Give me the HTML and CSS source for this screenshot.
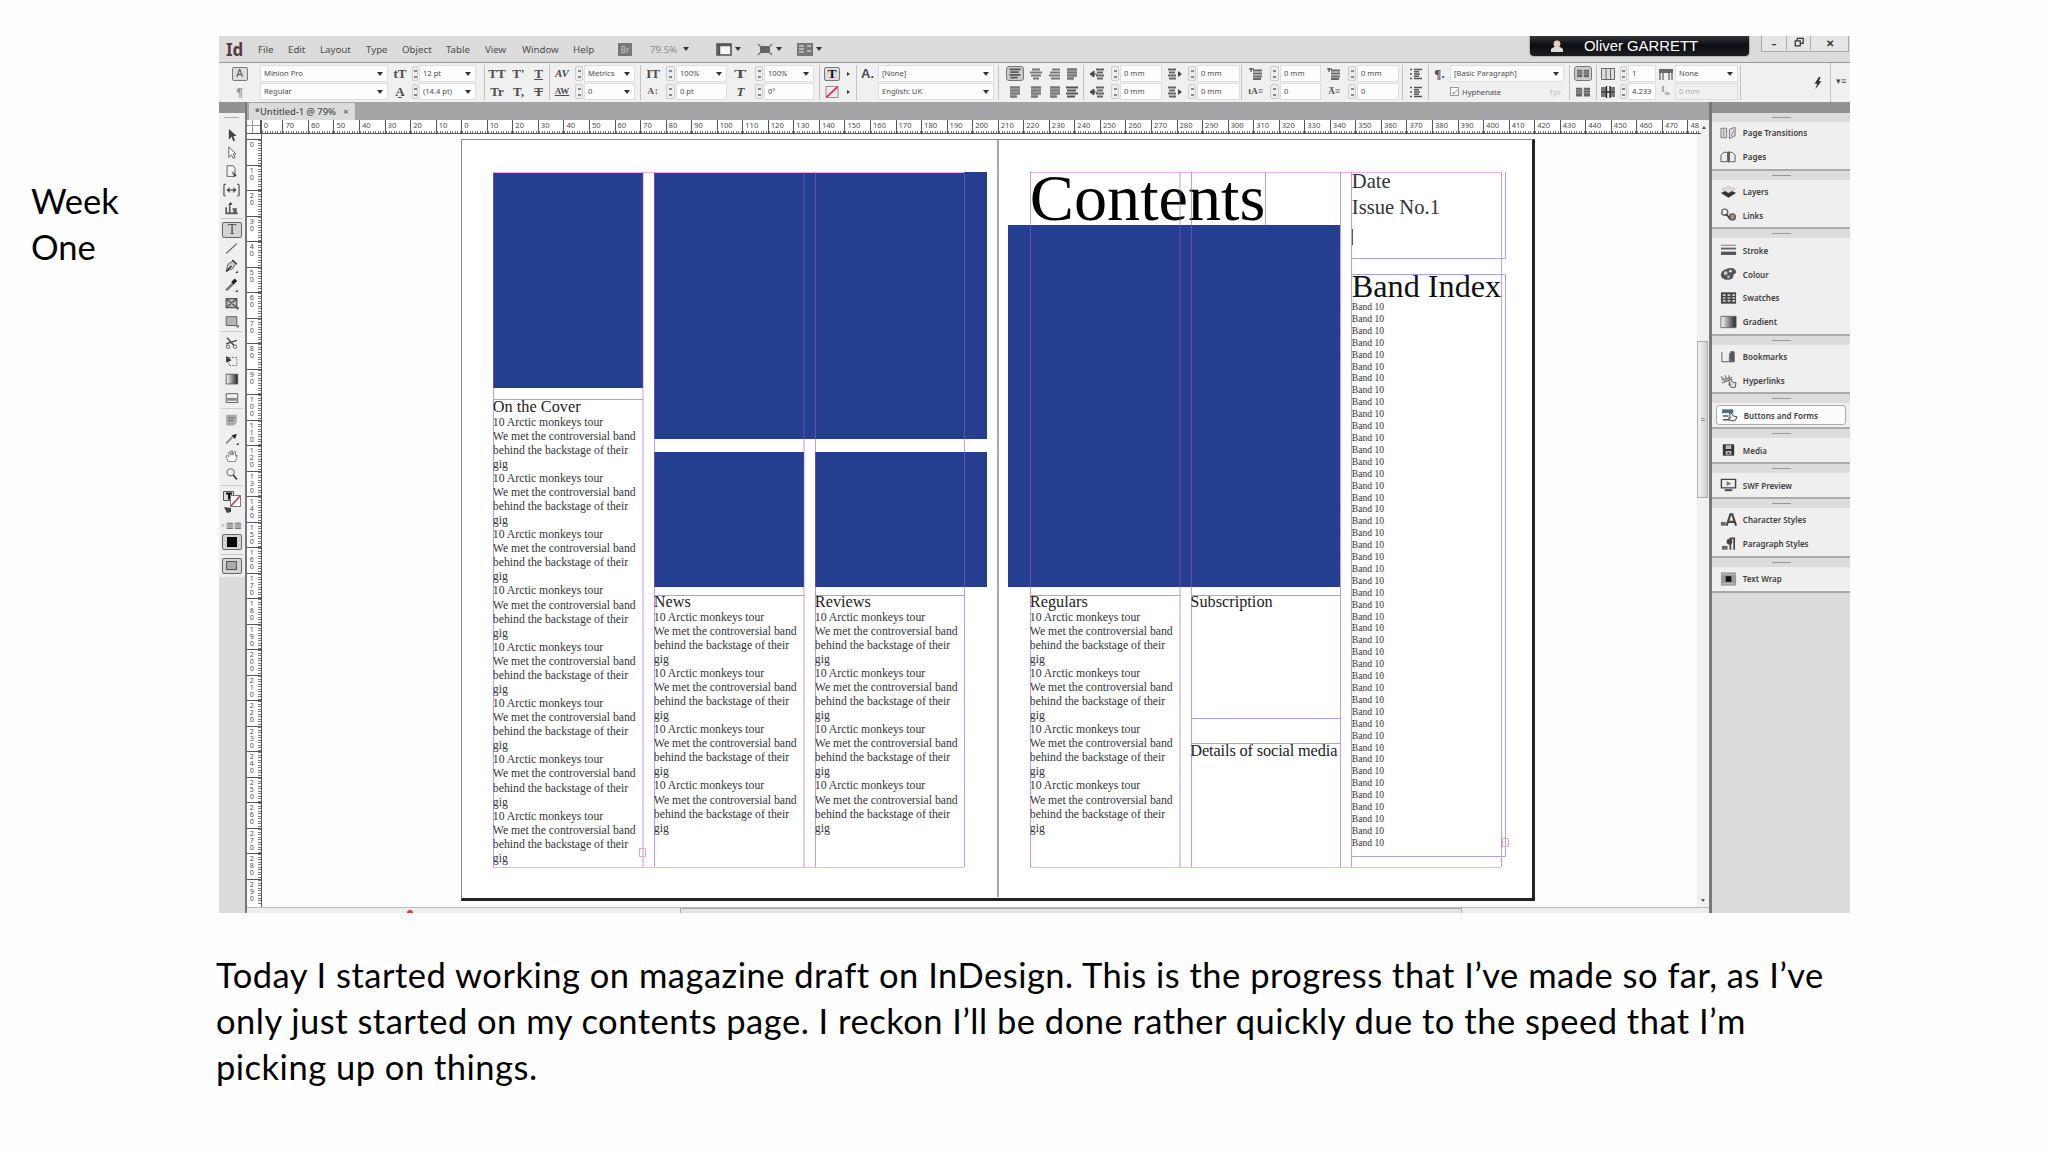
FILE: index.html
```
<!DOCTYPE html>
<html lang="en">
<head>
  <meta charset="UTF-8" />
  <meta name="viewport" content="width=device-width, initial-scale=1.0" />
  <title>Week One - Magazine Draft</title>
  <link rel="stylesheet" href="styles.css">
</head>
<body>

  <svg class="sprite">
    <symbol id="align" viewBox="0 0 12 12"><path d="M0 1.5h12M1 4.5h9M0 7.5h12M1 10.5h8" stroke="#555" stroke-width="2"/></symbol>
    <symbol id="center" viewBox="0 0 12 12"><path d="M2 1.5h8M0 4.5h12M1 7.5h10M3 10.5h6" stroke="#777" stroke-width="2"/></symbol>
    <symbol id="right" viewBox="0 0 12 12"><path d="M3 1.5h8M1 4.5h10M0 7.5h11M2 10.5h9" stroke="#777" stroke-width="2"/></symbol>
    <symbol id="justify" viewBox="0 0 12 12"><path d="M1 1.5h10M1 4.5h10M1 7.5h10M1 10.5h7" stroke="#777" stroke-width="2.3"/></symbol>
    <symbol id="indent" viewBox="0 0 14 12"><path d="M6 1.5h8M7 4.5h6M6 7.5h8M7 10.5h6" stroke="#666" stroke-width="2"/><path d="M0 6l4-3v6zM3 6h4" fill="#444" stroke="#444"/></symbol>
    <symbol id="outdent" viewBox="0 0 14 12"><path d="M0 1.5h8M1 4.5h6M0 7.5h8M1 10.5h7" stroke="#666" stroke-width="2"/><path d="M14 6l-4-3v6z" fill="#444"/></symbol>
    <symbol id="space" viewBox="0 0 14 12"><path d="M4 2.5h9M4 5.5h9M4 8.500h9M4 11h8" stroke="#666" stroke-width="2.200"/><path d="M0 1h5M2 0v4" stroke="#333"/></symbol>
    <symbol id="list" viewBox="0 0 12 12"><path d="M0 1.500h2M4 1.500h8M0 6h2M4 6h6M0 10.500h2M4 10.500h8M4 3.700h5M4 8.300h5" stroke="#555" stroke-width="1.500"/></symbol>
    <symbol id="cols" viewBox="0 0 14 12"><path d="M.5.500h13v11H.5zM5 0v12M9.500 0v12" fill="#ddd" stroke="#666"/></symbol>
    <symbol id="gutter" viewBox="0 0 14 12"><path d="M0 3h5M9 3h5M0 9h5M9 9h5" stroke="#777" stroke-width="4"/><path d="M0 6h14M5.500 0v12M9 0v12" stroke="#222" stroke-width="1.300"/></symbol>
    <symbol id="span" viewBox="0 0 16 12"><path d="M0 1h7v10H0zM9 1h7v10H9z" fill="#666"/><path d="M0 4h16M0 7h16" stroke="#aaa"/></symbol>
    <symbol id="across" viewBox="0 0 14 12"><path d="M0 1h14v4H0z" fill="#666"/><path d="M1 5v7M4 5v7M10 5v7M13 5v7" stroke="#777" stroke-width="1.500"/></symbol>
    <symbol id="none" viewBox="0 0 15 14"><path d="M.5.500h14v13H.5z" fill="#fbe9ee" stroke="#777"/><path d="M1 13L14 1" stroke="#c8324e" stroke-width="2"/></symbol>
    <symbol id="screen" viewBox="0 0 16 13"><path d="M1 1h14v11H1z" fill="#f6f6f6" stroke="#555" stroke-width="1.600"/><path d="M1 2h14M3 2v10" stroke="#555" stroke-width="2.500"/></symbol>
    <symbol id="frame" viewBox="0 0 16 13"><path d="M3 3h10v7H3z" fill="#666"/><path d="M1 1l3 3M15 1l-3 3M1 12l3-3M15 12l-3-3" stroke="#777" stroke-width="1.500"/></symbol>
    <symbol id="arrange" viewBox="0 0 16 13"><path d="M0 0h16v13H0z" fill="#777"/><path d="M2 3h5M2 6h5M2 9h5M10 3h4M10 8h4" stroke="#ccc" stroke-width="1.500"/></symbol>
    <symbol id="restore" viewBox="0 0 12 12"><path d="M4 1.500h7v6H4z" fill="none" stroke="#333" stroke-width="1.500"/><path d="M1.500 4.500h6v6h-6z" fill="#e6e6e6" stroke="#333" stroke-width="1.500"/></symbol>
    <symbol id="bolt" viewBox="0 0 12 14"><path d="M7 0L2 8h3l-2 6 7-9H7l2-5z" fill="#333"/></symbol>

    <symbol id="t-select" viewBox="0 0 16 16"><path d="M5 1v12l3-3 2 5 2-1-2-5h4z" fill="#444"/></symbol>
    <symbol id="t-direct" viewBox="0 0 16 16"><path d="M5 1v12l3-3 2 4 2-1-2-4h3z" fill="#fff" stroke="#555"/></symbol>
    <symbol id="t-page" viewBox="0 0 16 16"><path d="M3 2h7l2 3v9H3z" fill="#f4f4f4" stroke="#555"/><path d="M8 8l6 5-3 1z" fill="#444"/></symbol>
    <symbol id="t-gap" viewBox="0 0 18 14"><path d="M1 1v12M17 1v12M4 7h10M1 1h2M1 13h2M17 1h-2M17 13h-2" stroke="#555" stroke-width="1.300"/><path d="M4 7l3-3v6zM14 7l-3-3v6z" fill="#444"/></symbol>
    <symbol id="t-collect" viewBox="0 0 16 16"><path d="M2 7v7h13M6 5v8M9 9h2v4M13 8v5" stroke="#555" stroke-width="1.800" fill="none"/><path d="M4 5l3-4 2 3" fill="#333"/></symbol>
    <symbol id="t-line" viewBox="0 0 16 16"><path d="M2 14L14 3" stroke="#555" stroke-width="1.200"/></symbol>
    <symbol id="t-pen" viewBox="0 0 16 16"><path d="M2 14l2-8 6-4 3 3-4 6z" fill="#ccc" stroke="#555"/><path d="M2 14l6-6M9 1l5 5" stroke="#333" stroke-width="1.600"/><path d="M15 13v3h-3z" fill="#333"/></symbol>
    <symbol id="t-pencil" viewBox="0 0 16 16"><path d="M2 14L11 5" stroke="#777" stroke-width="3"/><path d="M9 6l4-4" stroke="#222" stroke-width="4"/><path d="M15 13v3h-3z" fill="#333"/></symbol>
    <symbol id="t-rectframe" viewBox="0 0 16 16"><path d="M2 3h12v10H2zM2 3l12 10M14 3L2 13" fill="#bbb" stroke="#555" stroke-width="1.400"/><path d="M16 12v3h-3z" fill="#333"/></symbol>
    <symbol id="t-rect" viewBox="0 0 16 16"><path d="M2 3h12v10H2z" fill="#b5b5b5" stroke="#555"/><path d="M16 12v3h-3z" fill="#333"/></symbol>
    <symbol id="t-scissors" viewBox="0 0 16 16"><path d="M3 2l8 9M2 9l12-4" stroke="#444" stroke-width="1.500"/><circle cx="12" cy="12" r="2" fill="none" stroke="#555"/><circle cx="4" cy="12" r="2" fill="none" stroke="#555"/></symbol>
    <symbol id="t-transform" viewBox="0 0 16 16"><path d="M5 4h9v9H5z" fill="none" stroke="#555" stroke-dasharray="2 1.500"/><path d="M2 2v8l6-3z" fill="#333"/></symbol>
    <symbol id="t-gradient" viewBox="0 0 16 16"><path d="M2 2.500h13v11H2z" fill="url(#grad)" stroke="#555"/></symbol>
    <symbol id="t-feather" viewBox="0 0 16 16"><path d="M2 3h13v10H2z" fill="#eee" stroke="#555"/><path d="M3 8h11v3H3z" fill="#888"/></symbol>
    <symbol id="t-note" viewBox="0 0 16 16"><path d="M2 2h12v8l-3 4H2z" fill="#aaa"/><path d="M4 5.500h8M4 8.500h6" stroke="#666"/></symbol>
    <symbol id="t-dropper" viewBox="0 0 16 16"><path d="M2 14l7-7" stroke="#888" stroke-width="2"/><path d="M8 5l4 4 2-6z" fill="#222"/><path d="M16 13v3h-3z" fill="#333"/></symbol>
    <symbol id="t-hand" viewBox="0 0 16 16"><path d="M4 14L1.500 8l2-.5L5 9V3.500h1.500L7.500 7V2H9l.5 5L11 3h1.500v5l2-1-2 7z" fill="#fff" stroke="#777"/></symbol>
    <symbol id="t-zoom" viewBox="0 0 16 16"><circle cx="7" cy="6" r="4" fill="#eee" stroke="#777" stroke-width="1.300"/><path d="M10 9l4 5" stroke="#444" stroke-width="2"/></symbol>

    <symbol id="p-trans" viewBox="0 0 18 14"><path d="M1 2h6v10H1zM10 3l6-2v9l-6 3z" fill="#ddd" stroke="#777"/><path d="M4 3v8M12 10l3-6" stroke="#888"/></symbol>
    <symbol id="p-pages" viewBox="0 0 18 14"><path d="M1 12V5l3-3h4v10zM10 12V2h3l3 3v7z" fill="#eee" stroke="#555"/><path d="M9 1v12" stroke="#555"/></symbol>
    <symbol id="p-layers" viewBox="0 0 18 14"><path d="M1 8l8-4 8 4-8 5z" fill="#333"/><path d="M2 4l7-3 7 3-7 4z" fill="#ddd" stroke="#999" stroke-width=".5"/></symbol>
    <symbol id="p-links" viewBox="0 0 18 14"><circle cx="5" cy="4" r="3.200" fill="none" stroke="#666" stroke-width="1.500"/><circle cx="13" cy="9" r="3.200" fill="#999" stroke="#555" stroke-width="1.500"/><path d="M6 6l5 5" stroke="#333" stroke-width="1.500"/></symbol>
    <symbol id="p-stroke" viewBox="0 0 18 14"><path d="M1 2h16" stroke="#777"/><path d="M1 5.500h16" stroke="#666" stroke-width="2"/><path d="M1 10.500h16" stroke="#555" stroke-width="3.500"/></symbol>
    <symbol id="p-colour" viewBox="0 0 18 14"><path d="M9 1c5-1 8 1 8 4 0 2-3 2-3 4 0 3-3 4-6 4-4 0-7-2-7-5 0-4 4-6 8-7z" fill="#555"/><circle cx="6" cy="6" r="2" fill="#ccc"/><circle cx="11" cy="4" r="1.500" fill="#ddd"/><circle cx="9" cy="10" r="1.500" fill="#bbb"/></symbol>
    <symbol id="p-swatches" viewBox="0 0 18 14"><path d="M1 1h16v12H1z" fill="#444"/><path d="M3 4h3M8 4h3M13 4h3M3 7h3M8 7h3M13 7h3M3 10h3M8 10h3M13 10h3" stroke="#ccc" stroke-width="1.700"/></symbol>
    <symbol id="p-gradient" viewBox="0 0 18 14"><path d="M1 1h16v12H1z" fill="url(#grad)" stroke="#666"/></symbol>
    <symbol id="p-book" viewBox="0 0 18 14"><path d="M2 2v10h7l1-1V3M10 12h5V2h-3z" fill="#eee" stroke="#555"/><path d="M11 1h4v12l-2-2-2 2z" fill="#555"/></symbol>
    <symbol id="p-hyper" viewBox="0 0 18 14"><path d="M1 2l5 6M5 1l3 6M9 1l2 6M1 6l12-3M2 9l11-4" stroke="#777" stroke-width="1.200"/><path d="M9 6l2 5-2-1 3 4h4l1-5-4-1-2-3z" fill="#ddd" stroke="#555"/></symbol>
    <symbol id="p-buttons" viewBox="0 0 18 14"><path d="M1 1h12v4H1z" fill="#4a7474"/><path d="M2 8h6M2 12h8" stroke="#555" stroke-width="1.500"/><path d="M9 5l1 5H8l2 3h5l2-4-4-1-2-3z" fill="#eee" stroke="#444"/></symbol>
    <symbol id="p-media" viewBox="0 0 18 14"><path d="M3 1h12v12H3z" fill="#333"/><path d="M6 2h6v4H6zM6 8h6v4H6z" fill="#bbb"/><path d="M8 9l3 1.500-3 1z" fill="#222"/></symbol>
    <symbol id="p-swf" viewBox="0 0 18 14"><path d="M1.500 1h15v9h-15z" fill="#eee" stroke="#444" stroke-width="1.500"/><path d="M7 3l5 2.500L7 8z" fill="#777"/><path d="M5 12.500h8" stroke="#444" stroke-width="2"/></symbol>
    <symbol id="p-char" viewBox="0 0 18 14"><path d="M7 13L11 1h2l4 12M9 9h6" fill="none" stroke="#444" stroke-width="2.200"/><path d="M1 9h5v4H1z" fill="#666"/></symbol>
    <symbol id="p-para" viewBox="0 0 18 14"><path d="M11 13V1h5M15 1v12" stroke="#444" stroke-width="1.800" fill="none"/><circle cx="10" cy="4.500" r="3" fill="#444"/><path d="M2 9h6v4H2z" fill="#666"/></symbol>
    <symbol id="p-wrap" viewBox="0 0 18 14"><path d="M1 0h16v14H1z" fill="#999"/><path d="M6 4h6v6H6z" fill="#111"/><path d="M2 2h14M2 12h14" stroke="#bbb"/></symbol>
    <linearGradient id="grad"><stop offset="0" stop-color="#fff"/><stop offset="1" stop-color="#222"/></linearGradient>
  </svg>

  <div class="slide">
    <h1 class="week">Week<br>One</h1>

    <div class="app">
      <div class="menubar">
        <span class="brand">Id</span>
        <span>File</span><span>Edit</span><span>Layout</span><span>Type</span><span>Object</span><span>Table</span><span>View</span><span>Window</span><span>Help</span>
        <span class="bridge">Br</span>
        <span class="zoom">79.5%</span>
        <i class="arrow"></i>
        <span class="view"><svg><use href="#screen"/></svg><i class="arrow"></i></span>
        <span class="view"><svg><use href="#frame"/></svg><i class="arrow"></i></span>
        <span class="view"><svg><use href="#arrange"/></svg><i class="arrow"></i></span>
        <div class="user">
          <svg viewBox="0 0 14 12"><path d="M1 12v-3l3-2h6l3 2v3z" fill="#ddd"/><circle cx="7" cy="4" r="3.400" fill="#e8cdb8"/></svg>
          Oliver GARRETT
        </div>
        <div class="window-buttons"><span>&#8211;</span><span><svg><use href="#restore"/></svg></span><span>&#10005;</span></div>
      </div>

      <div class="control">
        <div class="grp g-font">
          <b class="on ico">A</b><div class="field">Minion Pro<i class="arrow"></i></div>
          <b class="ico grey">¶</b><div class="field">Regular<i class="arrow"></i></div>
        </div>
        <div class="grp g-size">
          <b class="ico">tT</b><i class="spin"></i><div class="field">12 pt<i class="arrow"></i></div>
          <b class="ico">A&#817;</b><i class="spin"></i><div class="field">(14.4 pt)<i class="arrow"></i></div>
        </div>
        <div class="grp g-case">
          <b class="ico">TT</b><b class="ico">T'</b><b class="ico"><u>T</u></b>
          <b class="ico">Tr</b><b class="ico">T,</b><b class="ico"><s>T</s></b>
        </div>
        <div class="grp g-kern">
          <b class="ico kern"><em>AV</em></b><i class="spin"></i><div class="field">Metrics<i class="arrow"></i></div>
          <b class="ico small"><u>AW</u></b><i class="spin"></i><div class="field">0<i class="arrow"></i></div>
        </div>
        <div class="grp g-scale">
          <b class="ico">IT</b><i class="spin"></i><div class="field">100%<i class="arrow"></i></div>
          <b class="ico wide">T</b><i class="spin"></i><div class="field">100%<i class="arrow"></i></div>
          <b class="ico small">A&#8597;</b><i class="spin"></i><div class="field">0 pt</div>
          <b class="ico"><em>T</em></b><i class="spin"></i><div class="field">0°</div>
        </div>
        <div class="grp g-fill">
          <b class="ico boxed">T</b><i class="next"></i>
          <svg class="ico"><use href="#none"/></svg><i class="next"></i>
        </div>
        <div class="grp g-style">
          <b class="ico sans">A.</b><div class="field">[None]<i class="arrow"></i></div>
          <span></span><div class="field">English: UK<i class="arrow"></i></div>
        </div>
        <div class="grp g-align">
          <svg class="ico on"><use href="#align"/></svg><svg class="ico"><use href="#center"/></svg><svg class="ico"><use href="#right"/></svg><svg class="ico"><use href="#justify"/></svg>
          <svg class="ico"><use href="#justify"/></svg><svg class="ico"><use href="#justify"/></svg><svg class="ico"><use href="#justify"/></svg><svg class="ico"><use href="#align"/></svg>
        </div>
        <div class="grp g-indent">
          <svg class="ico"><use href="#indent"/></svg><i class="spin"></i><div class="field">0 mm</div>
          <svg class="ico"><use href="#outdent"/></svg><i class="spin"></i><div class="field">0 mm</div>
          <svg class="ico"><use href="#indent"/></svg><i class="spin"></i><div class="field">0 mm</div>
          <svg class="ico"><use href="#outdent"/></svg><i class="spin"></i><div class="field">0 mm</div>
        </div>
        <div class="grp g-space">
          <svg class="ico"><use href="#space"/></svg><i class="spin"></i><div class="field">0 mm</div>
          <svg class="ico"><use href="#space"/></svg><i class="spin"></i><div class="field">0 mm</div>
          <b class="ico small">tA≡</b><i class="spin"></i><div class="field">0</div>
          <b class="ico small">A&#773;≡</b><i class="spin"></i><div class="field">0</div>
        </div>
        <div class="grp g-list">
          <svg class="ico"><use href="#list"/></svg>
          <svg class="ico"><use href="#list"/></svg>
        </div>
        <div class="grp g-para">
          <b class="ico">¶.</b><div class="field">[Basic Paragraph]<i class="arrow"></i></div>
          <span></span><div class="hyphen"><i class="check">✓</i>Hyphenate<span>Tpr</span></div>
        </div>
        <div class="grp g-span">
          <svg class="ico on"><use href="#span"/></svg>
          <svg class="ico"><use href="#span"/></svg>
        </div>
        <div class="grp g-cols">
          <svg class="ico"><use href="#cols"/></svg><i class="spin"></i><div class="field">1</div>
          <svg class="ico"><use href="#across"/></svg><div class="field">None<i class="arrow"></i></div>
          <svg class="ico"><use href="#gutter"/></svg><i class="spin"></i><div class="field">4.233</div>
          <b class="ico small grey">I<sub>m</sub></b><div class="field off">0 mm</div>
        </div>
        <div class="quick"><svg class="ico"><use href="#bolt"/></svg></div>
        <div class="flyout">▾≡</div>
      </div>

      <div class="workspace">
        <div class="tools">
          <div class="bar"></div>
          <div class="grip"></div>
          <svg><use href="#t-select"/></svg>
          <svg><use href="#t-direct"/></svg>
          <svg><use href="#t-page"/></svg>
          <svg><use href="#t-gap"/></svg>
          <svg><use href="#t-collect"/></svg>
          <hr>
          <div class="tool on">T</div>
          <svg><use href="#t-line"/></svg>
          <svg><use href="#t-pen"/></svg>
          <svg><use href="#t-pencil"/></svg>
          <svg><use href="#t-rectframe"/></svg>
          <svg><use href="#t-rect"/></svg>
          <hr>
          <svg><use href="#t-scissors"/></svg>
          <svg><use href="#t-transform"/></svg>
          <svg><use href="#t-gradient"/></svg>
          <svg><use href="#t-feather"/></svg>
          <hr>
          <svg><use href="#t-note"/></svg>
          <svg><use href="#t-dropper"/></svg>
          <svg><use href="#t-hand"/></svg>
          <svg><use href="#t-zoom"/></svg>
          <hr>
          <svg class="paint" viewBox="0 0 20 26">
            <path d="M1.500 2.500h10v9h-10z" fill="#ddd" stroke="#555"/><path d="M4 4.500h6M7 4.500v6" stroke="#111" stroke-width="2"/>
            <path d="M8.500 6.500h10v11h-10z" fill="#fff" stroke="#777"/><path d="M9 17l9-10" stroke="#c8324e" stroke-width="1.500"/>
            <path d="M2 18l7 1v4l-4 1z" fill="#444"/>
          </svg>
          <div class="mini">▫ ▥▥</div>
          <div class="tool on"><i class="black"></i></div>
          <hr>
          <div class="tool on"><i class="mode"></i></div>
        </div>

        <div class="document">
          <div class="tabs"><div class="tab">*Untitled-1 @ 79% <span>×</span></div></div>
          <div class="ruler-row">
            <div class="corner"></div>
            <div class="ruler" id="rulerX"></div>
            <div class="scroll-cap"><i></i></div>
          </div>
          <div class="canvas">
            <div class="ruler-v" id="rulerY"></div>
            <div class="pasteboard">
              <div class="spread">
                <div class="pic pic-a"></div>
                <div class="pic pic-b"></div>
                <div class="pic pic-c"></div>
                <div class="pic pic-d"></div>
                <div class="pic pic-e"></div>

                <div class="story cover" data-repeat="8"><h3>On the Cover</h3></div>
                <div class="story news" data-repeat="4"><h3>News</h3></div>
                <div class="story reviews" data-repeat="4"><h3>Reviews</h3></div>
                <div class="story regulars" data-repeat="4"><h3>Regulars</h3></div>
                <div class="story subscription"><h3>Subscription</h3></div>
                <div class="story social"><h3>Details of social media</h3></div>
                <h2 class="contents">Contents</h2>
                <div class="issue">Date<br>Issue No.1</div>
                <div class="bands" id="bands"><h3>Band Index</h3></div>

                <!-- margins, columns and frame edges -->
                <svg class="guides" viewBox="462 140 1070 757">
                  <path class="spine" d="M998 140V897"/>
                  <path class="margin" d="M493 172.500H964M493 867.500H964M1030 172.500H1501M1030 867.500H1501"/>
                  <path class="column" d="M493.500 172V867M643 172V867M654.500 172V867M804 172V867M815.500 172V867M964.500 172V867M1030.500 172V867M1180 172V867M1191.500 172V867M1340.500 172V867M1351.500 172V867M1501.500 172V867"/>
                  <path class="edge" d="M493 399.500H643M654 595.500H804M815 595.500H964M1030 595.500H1180M1191 595.500H1340M1191 718.500H1340M1191 743.500H1340M1265.500 172V225M1351 258.500H1505.500V172M1351 274.500H1505.500V856.500H1351"/>
                  <path class="overset" d="M1502.500 838.500h6v8h-6zM639.500 848.500h6v8h-6z"/>
                  <path class="caret" d="M1352.500 229V245"/>
                </svg>
              </div>
            </div>
            <div class="scrollbar"><div class="thumb">=</div><i></i></div>
          </div>
          <div class="status"><span></span><i class="dot"></i><div class="track"></div></div>
        </div>

        <div class="dock">
          <div class="bar"></div>
          <div class="panel"><a><svg><use href="#p-trans"/></svg>Page Transitions</a><a><svg><use href="#p-pages"/></svg>Pages</a></div>
          <div class="panel"><a><svg><use href="#p-layers"/></svg>Layers</a><a><svg><use href="#p-links"/></svg>Links</a></div>
          <div class="panel"><a><svg><use href="#p-stroke"/></svg>Stroke</a><a><svg><use href="#p-colour"/></svg>Colour</a><a><svg><use href="#p-swatches"/></svg>Swatches</a><a><svg><use href="#p-gradient"/></svg>Gradient</a></div>
          <div class="panel"><a><svg><use href="#p-book"/></svg>Bookmarks</a><a><svg><use href="#p-hyper"/></svg>Hyperlinks</a></div>
          <div class="panel"><a class="active"><svg><use href="#p-buttons"/></svg>Buttons and Forms</a></div>
          <div class="panel"><a><svg><use href="#p-media"/></svg>Media</a></div>
          <div class="panel"><a><svg><use href="#p-swf"/></svg>SWF Preview</a></div>
          <div class="panel"><a><svg><use href="#p-char"/></svg>Character Styles</a><a><svg><use href="#p-para"/></svg>Paragraph Styles</a></div>
          <div class="panel"><a><svg><use href="#p-wrap"/></svg>Text Wrap</a></div>
        </div>
      </div>
    </div>

    <p class="caption">Today I started working on magazine draft on InDesign. This is the progress that I’ve made so far, as I’ve<br>only just started on my contents page. I reckon I’ll be done rather quickly due to the speed that I’m<br>picking up on things.</p>
  </div>

  <script>
    // rulers, one cell every 10 mm
    const rulerX = document.getElementById("rulerX");
    for (let mm = -80; mm <= 470; mm += 10) {
      const cell = document.createElement("span");
      // the first and last cells only have room for part of their number
      cell.textContent = mm === -80 ? "0" : Math.abs(mm);
      rulerX.appendChild(cell);
    }
    const last = document.createElement("span");
    last.textContent = "48";
    rulerX.appendChild(last);

    const rulerY = document.getElementById("rulerY");
    for (let mm = 0; mm <= 290; mm += 10) {
      const cell = document.createElement("span");
      cell.innerHTML = String(mm).split("").join("<br>");
      rulerY.appendChild(cell);
    }

    // placeholder copy
    document.querySelectorAll(".story[data-repeat]").forEach(story => {
      for (let i = 0; i < story.dataset.repeat; i++) {
        const p = document.createElement("p");
        p.innerHTML = "10 Arctic monkeys tour<br>We met the controversial band<br>behind the backstage of their<br>gig";
        story.appendChild(p);
      }
    });

    const bands = document.getElementById("bands");
    for (let i = 0; i < 46; i++) {
      const p = document.createElement("p");
      p.textContent = "Band 10";
      bands.appendChild(p);
    }
  </script>

</body>
</html>
```
FILE: styles.css
```
* {
  box-sizing: border-box;
}

body {
  margin: 0;
  background: #fefefe;
  color: #000;
  font-family: Lato, sans-serif;
  overflow: hidden;
}

.sprite {
  position: absolute;
  width: 0;
  height: 0;
}

.slide {
  display: grid;
  grid-template-columns: 219px 1631px;
  grid-template-rows: 877px auto;
  padding-top: 36px;
  height: 1152px;
}

.week {
  margin: 142px 0 0 31px;
  font-size: 34.5px;
  font-weight: normal;
  line-height: 46px;
}

.caption {
  grid-column: 2;
  margin: 39px 0 0 -3px;
  font-size: 34.5px;
  letter-spacing: .5px;
  line-height: 46px;
  white-space: nowrap;
}

/* application window */
.app {
  display: flex;
  flex-direction: column;
  height: 877px;
  overflow: hidden;
  background: #dcdcdc;
  font-family: "Noto Sans", sans-serif;
  color: #4c4c4c;
}

.menubar {
  display: grid;
  grid-template-columns: 32px 30px 32px 46px 36px 44px 39px 37px 51px 45px 32px 33px 33px 41px 40px 733px 231px 88px;
  height: 26px;
  padding-left: 7px;
  align-items: center;
  font-size: 9.7px;
  white-space: nowrap;
}

.brand {
  font-size: 17px;
  font-weight: bold;
  color: #5c3a44;
}

.bridge {
  width: 14px;
  height: 13px;
  background: #777;
  color: #ccc;
  font-size: 8px;
  line-height: 13px;
  text-align: center;
}

.zoom {
  color: #888;
}

.view {
  display: flex;
  align-items: center;
  gap: 3px;
}

.view svg {
  width: 16px;
  height: 13px;
}

.arrow {
  display: block;
  flex: none;
  width: 0;
  height: 0;
  border: 3px solid transparent;
  border-top: 4px solid #333;
  border-bottom: 0;
}

.user {
  display: flex;
  align-self: start;
  align-items: center;
  gap: 20px;
  width: 219px;
  height: 20px;
  padding-left: 20px;
  border-radius: 0 0 4px 4px;
  background: linear-gradient(#34363a, #0c0d10 45%, #1c1e22);
  box-shadow: 0 0 2px #555;
  color: #fff;
  font-family: "Liberation Sans", sans-serif;
  font-size: 14.9px;
}

.user svg {
  width: 14px;
  height: 12px;
}

.window-buttons {
  display: grid;
  grid-template-columns: 24px 24px 38px;
  align-self: start;
  height: 16px;
  border: 1px solid #aaa;
  border-top: 0;
  background: #e6e6e6;
  color: #333;
  font-size: 10px;
  font-weight: bold;
  line-height: 15px;
  text-align: center;
}

.window-buttons span + span {
  border-left: 1px solid #aaa;
}

.window-buttons svg {
  width: 10px;
  height: 10px;
}

/* control strip */
.control {
  display: flex;
  height: 40px;
  border-top: 1px solid #999;
  background: #f1f0f1;
}

.grp {
  display: grid;
  grid-template-rows: 17px 17px;
  row-gap: 1px;
  flex: none;
  margin: 2px 0;
  align-items: center;
  border-right: 1px solid #c4c4c4;
}

.g-font { grid-template-columns: 41px 128px; width: 170px; border: 0; }
.g-size { grid-template-columns: 22px 8px 57px; width: 96px; }
.g-case { grid-template-columns: 24px 19px 21px; width: 65px; }
.g-kern { grid-template-columns: 24px 10px 51px; width: 91px; }
.g-scale { grid-template-columns: 24px 11px 51px 27px 10px 50px; width: 179px; }
.g-fill { grid-template-columns: 24px 12px; width: 37px; }
.g-style { grid-template-columns: 21px 116px; width: 142px; }
.g-align { grid-template-columns: 22px 20px 17px 18px; width: 85px; padding-left: 5px; }
.g-indent { grid-template-columns: 26px 10px 42px 25px 10px 43px; width: 158px; }
.g-space { grid-template-columns: 27px 11px 41px 26px 10px 42px; width: 161px; }
.g-list { grid-template-columns: 25px; width: 26px; }
.g-para { grid-template-columns: 21px 114px; width: 141px; }
.g-span { grid-template-columns: 26px; width: 27px; }
.g-cols { grid-template-columns: 22px 9px 28px 19px 63px; width: 144px; }

.ico {
  justify-self: center;
  font-family: "Liberation Serif", serif;
  font-size: 13px;
  line-height: 15px;
  white-space: nowrap;
}

svg.ico {
  width: 14px;
  height: 12px;
}

.ico.small { font-size: 9px; }
.ico.kern { font-size: 11px; }
.ico.grey { color: #999; }
.ico.wide { transform: scaleX(1.4); }
.ico.sans { font-family: "Liberation Sans", sans-serif; }
.ico sub { font-size: 6px; }

b.ico.on,
b.ico.boxed {
  width: 16px;
  height: 14px;
  border: 1px solid #777;
  border-radius: 2px;
  line-height: 12px;
  text-align: center;
  background: #ddd;
}

b.ico.boxed {
  color: #111;
}

b.ico.on {
  font-family: "Liberation Sans", sans-serif;
  font-size: 10px;
  font-weight: normal;
}

svg.ico.on {
  width: 18px;
  height: 15px;
  padding: 1px 2px;
  border: 1px solid #777;
  border-radius: 3px;
  background: #ccc;
}

.field {
  display: flex;
  align-items: center;
  justify-content: space-between;
  height: 17px;
  padding: 0 4px 0 3px;
  border: 1px solid #dedede;
  background: #fdfdfd;
  font-size: 7.6px;
  line-height: 15px;
  white-space: nowrap;
}

.field.off {
  background: #f1f0f1;
  color: #aaa;
}

.spin {
  height: 15px;
  margin: 0 1px;
  border: 1px solid #ccc;
  border-radius: 2px;
  background: linear-gradient(#888, #888) center 3px / 3px 2px no-repeat, linear-gradient(#888, #888) center 9px / 3px 2px no-repeat, #eee;
}

.next {
  width: 0;
  border: 2px solid transparent;
  border-left: 3px solid #333;
  margin-left: 3px;
}

.hyphen {
  display: flex;
  align-items: center;
  gap: 3px;
  font-size: 7.6px;
}

.hyphen span {
  margin-left: auto;
  padding-right: 3px;
  color: #bbb;
}

.check {
  width: 9px;
  height: 9px;
  border: 1px solid #999;
  background: #fff;
  font-size: 8px;
  line-height: 7px;
}

.quick {
  display: flex;
  align-items: center;
  justify-content: flex-end;
  width: 90px;
  padding-right: 5px;
  border-right: 1px solid #c4c4c4;
}

.flyout {
  padding-left: 5px;
  font-size: 9px;
  line-height: 35px;
}

/* workspace */
.workspace {
  display: flex;
  flex: 1;
  min-height: 0;
}

.bar {
  height: 11px;
  background: #929194;
}

.tools {
  display: flex;
  flex-direction: column;
  align-items: center;
  width: 28px;
  border-right: 2px solid #777;
  background: linear-gradient(#f0eff0 475px, #dcdcdc 0);
}

.tools .bar {
  align-self: stretch;
}

.tools .grip {
  width: 15px;
  height: 13px;
  border-top: 1px solid transparent;
  background: linear-gradient(#aaa, #aaa) 0 3px / 100% 1px no-repeat;
}

.tools svg {
  flex: none;
  width: 17px;
  height: 14.2px;
  margin: 2px 0;
}

.tools hr {
  flex: none;
  width: 22px;
  height: 1px;
  margin: 1px 0 2px;
  border: 0;
  background: #ccc;
}

.tool.on {
  flex: none;
  display: flex;
  align-items: center;
  justify-content: center;
  width: 20px;
  height: 16px;
  margin: 1.1px 0;
  border: 1px solid #666;
  border-radius: 2px;
  background: #d4d4d4;
  font: 14px/14px "Liberation Serif", serif;
}

.tools .paint {
  width: 20px;
  height: 26px;
  margin: 1px 0;
}

.mini {
  height: 17px;
  font-size: 8px;
  line-height: 17px;
  white-space: nowrap;
}

.mini + .tool {
  margin-bottom: 3px;
}

.black {
  width: 10px;
  height: 10px;
  background: #000;
}

.mode {
  width: 11px;
  height: 9px;
  border: 1px solid #555;
  background: #aaa;
}

.document {
  display: flex;
  flex-direction: column;
  width: 1462px;
}

.tabs {
  height: 18px;
  padding: 1px 0 0 2px;
  background: #a5a4a7;
}

.tab {
  width: 106px;
  height: 17px;
  padding-left: 6px;
  background: #dbdbdb;
  font-size: 9.3px;
  font-weight: 500;
  line-height: 17px;
  white-space: nowrap;
}

.tab span {
  margin-left: 5px;
}

.ruler-row {
  display: flex;
  height: 14px;
}

.corner {
  width: 14px;
  border-right: 1px solid #555;
  border-bottom: 1px solid #555;
  background: linear-gradient(#999, #999) 0 5px / 100% 1px no-repeat, linear-gradient(#999, #999) 5px 0 / 1px 100% no-repeat, #fff;
}

.ruler {
  display: flex;
  width: 1440px;
  overflow: hidden;
  border-bottom: 1px solid #555;
  background: #fff;
}

.ruler span {
  flex: none;
  width: 25.55px;
  padding-left: 2px;
  border-left: 1px solid #555;
  background: repeating-linear-gradient(90deg, #777 0 1px, transparent 1px 2.555px) 0 100% / 100% 2px no-repeat;
  font-size: 7.6px;
  line-height: 10px;
}

.ruler span:first-child {
  width: 21.55px;
}

.ruler span:last-child {
  width: 13px;
}

.scroll-cap {
  flex: 1;
  padding: 6px 0 0 1px;
  background: #f0f0f0;
}

.scroll-cap i {
  display: block;
  width: 0;
  border: 2px solid transparent;
  border-top: 0;
  border-bottom: 3px solid #555;
}

.canvas {
  display: flex;
  flex: 1;
  min-height: 0;
}

.ruler-v {
  display: flex;
  flex-direction: column;
  width: 15px;
  padding-top: 5px;
  overflow: hidden;
  border-right: 1px solid #555;
  background: #fff;
}

.ruler-v span {
  flex: none;
  height: 25.5px;
  padding: 1px 0 0 3px;
  border-top: 1px solid #555;
  background: repeating-linear-gradient(#777 0 1px, transparent 1px 2.55px) 100% 0 / 3px 100% no-repeat;
  font-size: 7px;
  line-height: 7px;
}

.pasteboard {
  position: relative;
  width: 1435px;
  background: #fefdfe;
}

/* page items sit freely on the spread */
.spread {
  position: absolute;
  left: 199px;
  top: 5px;
  width: 1074px;
  height: 762px;
  border: 1px solid #888;
  border-right: 3px solid #222;
  border-bottom: 3px solid #222;
  background: #fff;
  font-family: "Liberation Serif", serif;
  color: #333;
}

.spread h2,
.spread h3,
.spread p {
  margin: 0;
  font-weight: normal;
  white-space: nowrap;
}

.pic,
.story,
.contents,
.issue,
.bands {
  position: absolute;
}

.pic { background: #243e90; }
.pic-a { left: 31px; top: 32px; width: 150px; height: 216px; }
.pic-b { left: 192px; top: 32px; width: 333px; height: 267px; }
.pic-c { left: 192px; top: 312px; width: 150px; height: 135px; }
.pic-d { left: 353px; top: 312px; width: 172px; height: 135px; }
.pic-e { left: 546px; top: 85px; width: 332px; height: 362px; }

.story {
  font-size: 11.72px;
  line-height: 14.08px;
}

.story h3 {
  font-size: 16.3px;
  line-height: 17.5px;
  color: #222;
}

.cover { left: 31px; top: 258px; }
.news { left: 192px; top: 453px; }
.reviews { left: 353px; top: 453px; }
.regulars { left: 568px; top: 453px; }
.subscription { left: 728.5px; top: 453px; }
.social { left: 728.5px; top: 601.5px; letter-spacing: -.12px; }

.spread .contents {
  left: 568px;
  top: 28px;
  margin: 0;
  font-size: 66.2px;
  line-height: 60px;
  color: #000;
}

.issue {
  left: 890px;
  top: 28px;
  font-size: 20.6px;
  line-height: 26px;
  white-space: nowrap;
}

.bands {
  left: 890px;
  top: 131px;
  font-size: 9.6px;
  line-height: 11.9px;
}

.bands h3 {
  font-size: 32.2px;
  line-height: 30px;
  color: #111;
}

.guides {
  position: absolute;
  left: 0;
  top: 0;
  width: 1070px;
  height: 757px;
  fill: none;
}

.spine { stroke: #555; }
.margin { stroke: #eeb0ee; }
.column { stroke: #9a58d6; stroke-opacity: .6; }
.edge { stroke: #a9a0e6; }
.overset { stroke: #f0a0c0; }
.caret { stroke: #555; }

.scrollbar {
  display: flex;
  flex-direction: column;
  align-items: center;
  width: 12px;
  padding-top: 207px;
  background: #f0f0f0;
}

.scrollbar i {
  margin-top: auto;
  margin-bottom: 5px;
  border: 2px solid transparent;
  border-top: 3px solid #555;
  border-bottom: 0;
}

.thumb {
  width: 11px;
  height: 157px;
  border: 1px solid #aaa;
  background: linear-gradient(90deg, #f4f4f4, #d0d0d0);
  font-size: 8px;
  line-height: 155px;
  text-align: center;
}

.status {
  display: flex;
  height: 6px;
  border-top: 1px solid #bbb;
  background: #f0eff0;
}

.status span {
  width: 160px;
}

.dot {
  width: 6px;
  height: 5px;
  margin-top: 2px;
  border-radius: 3px 3px 0 0;
  background: #d0432c;
}

.track {
  width: 782px;
  margin-left: 267px;
  border: 1px solid #aaa;
  border-bottom: 0;
  background: #e4e4e4;
}

/* panel dock */
.dock {
  width: 142px;
  border-left: 3px solid #777;
}

.panel {
  padding-top: 9px;
  border-bottom: 2px solid #aaa;
  background: linear-gradient(#999, #999) 60px 4px / 19px 1px no-repeat, linear-gradient(#dcdcdc 9px, #f0eff0 0);
}

.panel a {
  display: flex;
  align-items: center;
  gap: 6px;
  height: 23.85px;
  padding-left: 8px;
  color: #3c3c3c;
  font-size: 8px;
  font-weight: 600;
}

.panel:nth-child(2) {
  padding-top: 8px;
}

.panel svg {
  width: 17px;
  height: 14px;
}

.panel a.active {
  height: 19.9px;
  margin: 2px 4px;
  padding-left: 4px;
  border: 1px solid #aaa;
  border-radius: 3px;
  background: #fcfcfc;
}
```
